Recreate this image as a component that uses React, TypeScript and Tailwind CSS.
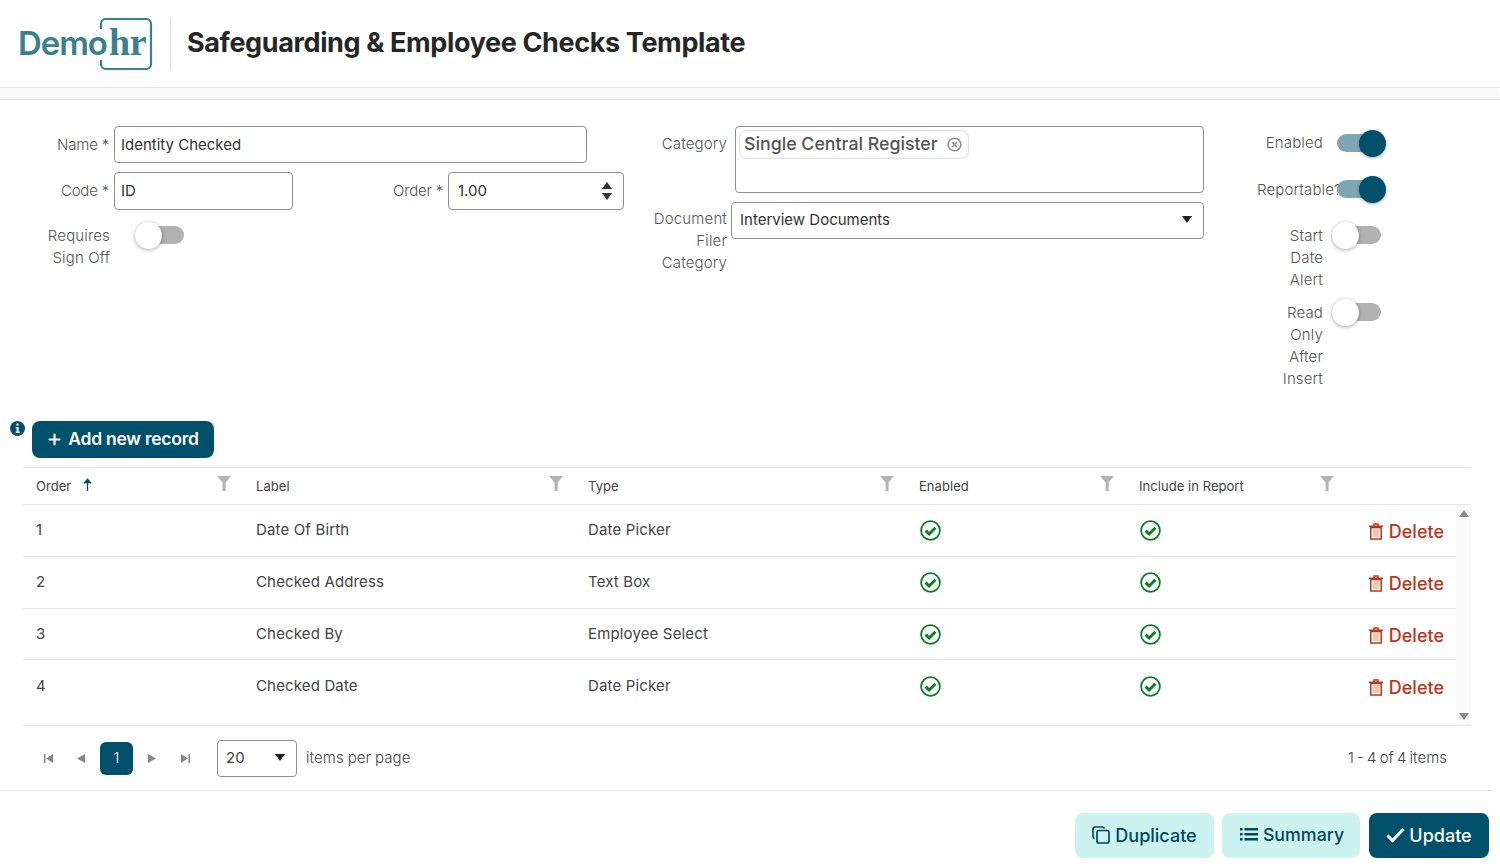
import React from 'react';
import { Plus } from 'lucide-react';

const font = { fontFamily: 'Inter, "Noto Sans", sans-serif' };

const Logo = () => (
  <svg width="135" height="52" viewBox="0 0 135 52" className="shrink-0">
    <path d="M83 11V6a5 5 0 0 1 5-5h40a5 5 0 0 1 5 5v40a5 5 0 0 1-5 5H88a5 5 0 0 1-5-5v-4" fill="none" stroke="#3a8090" strokeWidth="2.2" />
    <text x="0" y="37" fontFamily="Inter, sans-serif" fontSize="33" fontWeight="600" fill="#3a8090" letterSpacing="-1.1">Demo</text>
    <text x="91" y="37" fontFamily="'Liberation Serif', serif" fontSize="38" fontWeight="700" fill="#3a8090" letterSpacing="-0.5">hr</text>
  </svg>
);

const Toggle = ({ on }: { on?: boolean }) => (
  <div className="relative h-[22px] w-[50px]">
    {on ? (
      <>
        <div className="absolute left-[0px] top-[2px] h-[18px] w-[44px] rounded-full bg-[#7fa6b4]" />
        <div className="absolute left-[22px] top-[-2px] h-[27px] w-[27px] rounded-full bg-[#004f6b] shadow-[0_1px_3px_rgba(0,0,0,0.35)]" />
      </>
    ) : (
      <>
        <div className="absolute left-[5px] top-[2px] h-[18px] w-[39px] rounded-full bg-[#b2b2b2]" />
        <div className="absolute left-[-5px] top-[-2px] h-[27px] w-[27px] rounded-full bg-white shadow-[0_1px_4px_rgba(0,0,0,0.35)]" />
      </>
    )}
  </div>
);

const Caret = ({ down = true, className = '' }: { down?: boolean; className?: string }) => (
  <svg width="10" height="7" viewBox="0 0 10 7" className={className}>
    <path d={down ? 'M0 0h10L5 7z' : 'M0 7h10L5 0z'} fill="currentColor" />
  </svg>
);

const Funnel = () => (
  <svg width="14" height="15" viewBox="0 0 14 15">
    <path d="M0 0h14L8.6 6.4V15H5.6V6.4z" fill="#b3b3b3" />
  </svg>
);

const CheckCircle = () => (
  <svg width="21" height="21" viewBox="0 0 21 21">
    <circle cx="10.5" cy="10.5" r="9.4" fill="none" stroke="#0a7d23" strokeWidth="1.8" />
    <path d="M5.6 10.6l3.5 3.4 6.3-6.3" fill="none" stroke="#0a7d23" strokeWidth="2.9" />
  </svg>
);

const TrashIcon = () => (
  <svg width="14" height="17" viewBox="0 0 14 17" className="shrink-0">
    <path d="M5 2.5V1h4v1.5M0 3.2h14" fill="none" stroke="#c2331c" strokeWidth="1.5" />
    <path d="M1.8 4.5h10.4V16H1.8z" fill="none" stroke="#c2331c" strokeWidth="1.5" />
    <path d="M5 6v8M7 6v8M9 6v8" stroke="#de9a6c" strokeWidth="1.1" />
  </svg>
);

const rows = [
  { order: '1', label: 'Date Of Birth', type: 'Date Picker', h: 'h-[52px]' },
  { order: '2', label: 'Checked Address', type: 'Text Box', h: 'h-[52px]' },
  { order: '3', label: 'Checked By', type: 'Employee Select', h: 'h-[51px]' },
  { order: '4', label: 'Checked Date', type: 'Date Picker', h: 'h-[52px]' },
];

const headers = ['Label', 'Type', 'Enabled', 'Include in Report'];
const cols = 'grid grid-cols-[220px_332px_331px_220px_220px_1fr]';

export default function App() {
  return (
    <div style={font} className="h-[867px] w-full overflow-hidden bg-white text-[15px] text-[#444]">
      {/* header */}
      <div className="flex h-[88px] items-center border-b border-[#e6e6e6] pl-[18px]">
        <Logo />
        <div className="ml-[17px] h-[52px] w-px bg-[#e6e6e6]" />
        <h1 className="ml-[16px] text-[27px] font-bold tracking-[-0.37px] text-[#262626]">
          Safeguarding &amp; Employee Checks Template
        </h1>
      </div>
      <div className="h-[12px] rounded-tr-lg border-b border-[#e6e6e6] bg-[#fafafa]" />

      {/* form */}
      <div className="flex h-[321px] pt-[26px] font-light tracking-[0.15px] text-[#555]">
        <div className="w-[624px]">
          <div className="flex items-center">
            <label className="w-[109px] pt-[1px] text-right tracking-[-0.2px]">Name *</label>
            <div className="ml-[5px] flex h-[37px] w-[473px] items-center rounded border border-[#8f8f8f] px-[6px] pt-[1px] font-normal tracking-normal text-[#333]">Identity Checked</div>
          </div>
          <div className="mt-[9px] flex items-center">
            <label className="w-[109px] text-right tracking-[-0.2px]">Code *</label>
            <div className="ml-[5px] flex h-[38px] w-[179px] items-center rounded border border-[#8f8f8f] px-[6px] font-normal tracking-normal text-[#333]">ID</div>
            <label className="w-[150px] text-right tracking-[-0.2px]">Order *</label>
            <div className="ml-[5px] flex h-[38px] w-[176px] items-center justify-between rounded border border-[#8f8f8f] pl-[9px] font-normal tracking-normal text-[#333]">
              1.00
              <div className="flex h-full w-[32px] flex-col items-center justify-center gap-[4px] text-[#333]">
                <Caret down={false} />
                <Caret />
              </div>
            </div>
          </div>
          <div className="mt-[14px] flex leading-[22px]">
            <label className="ml-[44px] w-[66px] pt-[1px] text-right">Requires Sign Off</label>
            <div className="ml-[30px]"><Toggle /></div>
          </div>
        </div>

        <div className="ml-[25px] w-[555px]">
          <div className="flex items-start">
            <label className="mt-[6px] w-[78px] text-right leading-[24px]">Category</label>
            <div className="ml-[8px] h-[67px] w-[469px] rounded border border-[#8f8f8f] p-[3px]">
              <div className="inline-flex h-[29px] items-center gap-[9px] rounded-lg border border-[#e0e0e0] pl-[4px] pr-[6px] text-[17.8px] font-medium tracking-normal text-[#555]">
                Single Central Register
                <svg width="15" height="15" viewBox="0 0 15 15">
                  <circle cx="7.5" cy="7.5" r="6.3" fill="none" stroke="#8a8f96" strokeWidth="1.6" />
                  <path d="M5 5l5 5M10 5l-5 5" stroke="#8a8f96" strokeWidth="1.6" />
                </svg>
              </div>
            </div>
          </div>
          <div className="mt-[9px] flex items-start">
            <label className="mt-[6px] w-[78px] text-right leading-[22px]">Document Filer Category</label>
            <div className="ml-[4px] flex h-[37px] w-[473px] items-center justify-between rounded border border-[#8f8f8f] pl-[8px] pr-[11px] font-normal tracking-normal text-[#333]">
              Interview Documents
              <Caret className="mb-[2px] text-[#222]" />
            </div>
          </div>
        </div>

        <div className="ml-[53px] pt-[6px] leading-[22px]">
          <div className="flex">
            <label className="w-[66px] text-right">Enabled</label>
            <div className="ml-[14px]"><Toggle on /></div>
          </div>
          <div className="mt-[24px] flex">
            <label className="w-[66px] pt-[1px] text-right">Reportable?</label>
            <div className="ml-[14px]"><Toggle on /></div>
          </div>
          <div className="mt-[23px] flex">
            <label className="w-[66px] pt-[1px] text-right">Start Date Alert</label>
            <div className="ml-[14px]"><Toggle /></div>
          </div>
          <div className="mt-[10px] flex">
            <label className="w-[66px] pt-[1px] text-right">Read Only After Insert</label>
            <div className="ml-[14px]"><Toggle /></div>
          </div>
        </div>
      </div>

      {/* toolbar */}
      <div className="flex h-[46px] items-start pl-[10px]">
        <svg width="15" height="15" viewBox="0 0 15 15" className="shrink-0">
          <circle cx="7.5" cy="7.5" r="7.5" fill="#004f6b" />
          <path d="M6.4 2.6h2.2v2H6.4zM5.7 6h2.9v4.6h1v1.4H5.7v-1.4h1V7.4h-1z" fill="#fff" />
        </svg>
        <button className="ml-[7px] flex h-[37px] w-[182px] items-center justify-center gap-[5px] rounded-lg bg-[#004f6b] pr-[1px] text-[17.5px] font-semibold tracking-[-0.25px] text-white">
          <Plus size={17} strokeWidth={3} />
          Add new record
        </button>
      </div>

      {/* table */}
      <div className="mx-[23px] mr-[29px] border-t border-[#e6e6e6]">
        <div className={`${cols} h-[37px] items-center border-b border-[#e6e6e6] pt-[2px] text-[13px] tracking-[0.05px]`}>
          <div className="flex items-center justify-between pl-[13px] pr-[12px]">
            <span className="flex items-center">
              Order
              <svg width="9" height="14" viewBox="0 0 9 14" className="mb-[4px] ml-[12px]">
                <path d="M4.5 13V2M1 5.2l3.5-4 3.5 4" fill="#004f6b" stroke="#004f6b" strokeWidth="1.3" />
              </svg>
            </span>
            <span className="mb-[8px]"><Funnel /></span>
          </div>
          {headers.map((h) => (
            <div key={h} className="flex items-center justify-between pl-[13px] pr-[12px]">
              <span>{h}</span>
              <span className="mb-[8px]"><Funnel /></span>
            </div>
          ))}
        </div>
        <div className="relative h-[221px] border-b border-[#e6e6e6]">
          {rows.map((r, i) => (
            <div key={r.order} className={`${cols} ${r.h} mr-[15px] items-center tracking-[0.15px] ${i < 3 ? 'border-b border-[#e6e6e6]' : ''}`}>
              <div className="pl-[13px]">{r.order}</div>
              <div className="pl-[13px]">{r.label}</div>
              <div className="pl-[13px]">{r.type}</div>
              <div className="pl-[14px]"><CheckCircle /></div>
              <div className="pl-[14px]"><CheckCircle /></div>
              <div className="flex items-center justify-end gap-[6px] pr-[12px] pt-[2px] text-[18px] font-medium tracking-normal text-[#c2331c]">
                <TrashIcon />
                Delete
              </div>
            </div>
          ))}
          <div className="absolute bottom-0 right-0 top-0 flex w-[15px] flex-col items-center justify-between bg-[#fafafa] py-[5px] text-[#8a8a8a]">
            <Caret down={false} />
            <Caret />
          </div>
        </div>
      </div>

      {/* pager */}
      <div className="mr-[7px] flex h-[65px] items-center justify-between border-b border-[#e6e6e6] pl-[44px] pr-[46px] text-[#444]">
        <div className="flex items-center">
          <svg width="9" height="9" viewBox="0 0 9 9"><path d="M0 0h1.5v9H0zM9 0v9L2 4.5z" fill="#888" /></svg>
          <svg width="8" height="9" viewBox="0 0 8 9" className="ml-[24px]"><path d="M8 0v9L0 4.5z" fill="#888" /></svg>
          <div className="ml-[15px] flex h-[33px] w-[33px] items-center justify-center rounded-md bg-[#004f6b] font-light text-white">1</div>
          <svg width="8" height="9" viewBox="0 0 8 9" className="ml-[15px]"><path d="M0 0v9l8-4.5z" fill="#888" /></svg>
          <svg width="9" height="9" viewBox="0 0 9 9" className="ml-[25px]"><path d="M9 0H7.5v9H9zM0 0v9l7-4.5z" fill="#888" /></svg>
          <div className="ml-[27px] flex h-[37px] w-[80px] items-center justify-between rounded border border-[#8f8f8f] pl-[8px] pr-[11px]">
            20
            <Caret className="mb-[2px] text-[#222]" />
          </div>
          <span className="ml-[9px] font-light tracking-[0.1px] [word-spacing:-0.5px]">items per page</span>
        </div>
        <span className="font-light [word-spacing:-1px]">1 - 4 of 4 items</span>
      </div>

      {/* footer */}
      <div className="flex justify-end gap-[8px] pr-[11px] pt-[22px] text-[18px] font-medium">
        <button className="flex h-[45px] w-[139px] items-center justify-center gap-[5px] rounded-lg bg-[#ccf3f0] text-[#00475f]">
          <svg width="18" height="18" viewBox="0 0 18 18" fill="none" stroke="currentColor" strokeWidth="1.7" className="mb-[2px]">
            <path d="M2.5 12.5A2 2 0 0 1 1 10.6V3a2 2 0 0 1 2-2h7.5a2 2 0 0 1 1.9 1.4" />
            <rect x="5" y="4.5" width="12" height="12.5" rx="2" />
          </svg>
          Duplicate
        </button>
        <button className="flex h-[45px] w-[138px] items-center justify-center gap-[5px] rounded-lg bg-[#ccf3f0] pl-[2px] text-[17.8px] text-[#00475f]">
          <svg width="18" height="13" viewBox="0 0 18 13" fill="currentColor" className="mb-[3px]">
            <path d="M0 0h2.5v2.5H0zM4.5 0H18v2.5H4.5zM0 5h2.5v2.5H0zM4.5 5H18v2.5H4.5zM0 10h2.5v2.5H0zM4.5 10H18v2.5H4.5z" />
          </svg>
          Summary
        </button>
        <button className="ml-px flex h-[45px] w-[120px] items-center justify-center gap-[4px] rounded-lg bg-[#004f6b] text-white">
          <svg width="19" height="16" viewBox="0 0 19 16" className="mb-[2px]">
            <path d="M1.5 8.5l5 5L17.5 2" fill="none" stroke="currentColor" strokeWidth="3" />
          </svg>
          Update
        </button>
      </div>
    </div>
  );
}
